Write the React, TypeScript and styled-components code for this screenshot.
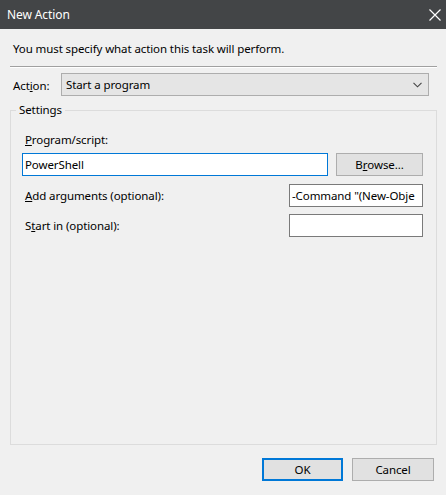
import styled, {createGlobalStyle} from 'styled-components';

const GlobalStyle = createGlobalStyle`
  html, body {
    margin: 0;
    padding: 0;
    background: #f0f0f0;
  }
  body {
    font-family: "Noto Sans", "Liberation Sans", sans-serif;
    font-size: 11.5px;
    letter-spacing: -0.1px;
    color: #000;
  }
`;

const App = () => {
  return (
    <>
      <GlobalStyle />
      <Window>
        <TitleBar>
          <Title>New Action</Title>
          <CloseIcon width="12" height="12" viewBox="0 0 12 12">
            <path d="M0.5 0.5 L11.5 11.5 M11.5 0.5 L0.5 11.5" stroke="#fff" strokeWidth="1.2" />
          </CloseIcon>
        </TitleBar>
        <Body>
          <Intro>You must specify what action this task will perform.</Intro>
          <Separator />
          <ActionRow>
            <Label>
              Act<u>i</u>on:
            </Label>
            <Combo>
              <span>Start a program</span>
              <svg width="9" height="6" viewBox="0 0 9 6">
                <path d="M0.5 0.8 L4.5 4.8 L8.5 0.8" fill="none" stroke="#444" strokeWidth="1.1" />
              </svg>
            </Combo>
          </ActionRow>
          <GroupBox>
            <Legend>Settings</Legend>
            <FieldLabel>
              <u>P</u>rogram/script:
            </FieldLabel>
            <ProgramRow>
              <TextInput $focused $width={306}>PowerShell</TextInput>
              <Button $width={87}>
                B<u>r</u>owse...
              </Button>
            </ProgramRow>
            <OptionRow>
              <FieldLabel>
                <u>A</u>dd arguments (optional):
              </FieldLabel>
              <TextInput $width={134}>-Command "(New-Obje</TextInput>
            </OptionRow>
            <OptionRow>
              <FieldLabel>
                S<u>t</u>art in (optional):
              </FieldLabel>
              <TextInput $width={134} />
            </OptionRow>
          </GroupBox>
          <Footer>
            <Button $width={81} $primary>
              OK
            </Button>
            <Button $width={82}>Cancel</Button>
          </Footer>
        </Body>
      </Window>
    </>
  );
};

export default App;

// Styled Components

const Window = styled.div`
  width: 446px;
  height: 495px;
  display: flex;
  flex-direction: column;
  background: #f0f0f0;
  overflow: hidden;
`;

const TitleBar = styled.div`
  height: 29px;
  display: flex;
  align-items: center;
  justify-content: space-between;
  background: #434547;
  padding: 0 5px 0 7px;
  flex-shrink: 0;
`;

const Title = styled.span`
  color: #fff;
  font-size: 12px;
`;

const CloseIcon = styled.svg`
  display: block;
`;

const Body = styled.div`
  flex: 1;
  display: flex;
  flex-direction: column;
  padding: 12px 9px 0 10px;
`;

const Intro = styled.div`
  padding-left: 3px;
  line-height: 16px;
`;

const Separator = styled.div`
  height: 1px;
  margin-top: 9px;
  background: #a0a0a0;
  border-bottom: 1px solid #fff;
`;

const ActionRow = styled.div`
  display: flex;
  align-items: center;
  margin-top: 5px;
`;

const Label = styled.span`
  width: 51px;
  padding-left: 3px;
  padding-top: 2px;
  box-sizing: border-box;
`;

const Combo = styled.div`
  width: 368px;
  height: 23px;
  box-sizing: border-box;
  display: flex;
  align-items: center;
  justify-content: space-between;
  padding: 0 6px 0 4px;
  background: #e5e5e5;
  border: 1px solid #adadad;
`;

const GroupBox = styled.div`
  position: relative;
  margin-top: 14px;
  height: 335px;
  box-sizing: border-box;
  border: 1px solid #dcdcdc;
  padding: 21px 13px 0 11px;
  display: flex;
  flex-direction: column;
`;

const Legend = styled.span`
  position: absolute;
  top: -9px;
  left: 5px;
  padding: 0 3px;
  background: #f0f0f0;
  line-height: 16px;
`;

const FieldLabel = styled.span`
  padding-left: 3px;
  line-height: 16px;
`;

const ProgramRow = styled.div`
  display: flex;
  align-items: center;
  justify-content: space-between;
  margin-top: 5px;
`;

const OptionRow = styled.div`
  display: flex;
  align-items: center;
  justify-content: space-between;
  margin-top: 8px;
  &:last-child {
    margin-top: 7px;
  }
`;

const TextInput = styled.div<{$focused?: boolean; $width: number}>`
  width: ${p => p.$width}px;
  height: 23px;
  box-sizing: border-box;
  display: flex;
  align-items: center;
  padding: 0 2px;
  background: #fff;
  border: 1px solid ${p => (p.$focused ? '#0078d7' : '#7a7a7a')};
  white-space: nowrap;
  overflow: hidden;
`;

const Button = styled.div<{$width: number; $primary?: boolean}>`
  width: ${p => p.$width}px;
  height: 23px;
  box-sizing: border-box;
  display: flex;
  align-items: center;
  justify-content: center;
  background: #e1e1e1;
  border: ${p => (p.$primary ? '2px solid #0078d7' : '1px solid #adadad')};
`;

const Footer = styled.div`
  display: flex;
  justify-content: flex-end;
  gap: 9px;
  margin-top: 13px;
  padding-right: 3px;
`;
